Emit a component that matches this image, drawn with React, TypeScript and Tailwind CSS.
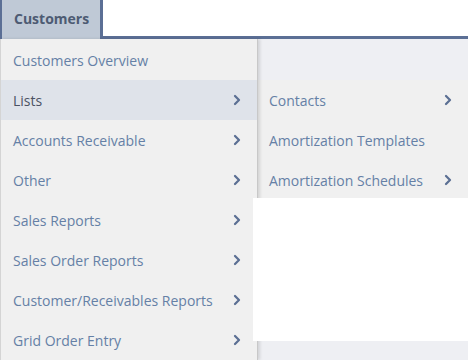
import { ChevronRight } from 'lucide-react';

const items = [
  { label: 'Customers Overview', sub: false },
  { label: 'Lists', sub: true, active: true },
  { label: 'Accounts Receivable', sub: true },
  { label: 'Other', sub: true },
  { label: 'Sales Reports', sub: true },
  { label: 'Sales Order Reports', sub: true },
  { label: 'Customer/Receivables Reports', sub: true },
  { label: 'Grid Order Entry', sub: true },
];

const subItems = [
  { label: 'Contacts', sub: true },
  { label: 'Amortization Templates', sub: false },
  { label: 'Amortization Schedules', sub: true },
];

export default function App() {
  return (
    <div
      className="w-[468px] h-[360px] overflow-hidden bg-[#eeeff3] text-[14px]"
      style={{ fontFamily: '"Open Sans", "Liberation Sans", sans-serif' }}
    >
      {/* Top tab bar */}
      <div className="flex h-[39px] bg-white">
        <div className="w-[103px] h-[39px] bg-[#bfc9d6] border-l-[2px] border-r-[3px] border-[#5b6f95] flex items-center pl-[12px] pb-[2px] font-bold text-[#4d5b73]">
          Customers
        </div>
        <div className="flex-1 flex flex-col justify-end">
          <div className="h-[3px] bg-[#5b6f95]" />
        </div>
      </div>

      <div className="flex">
        {/* Main menu */}
        <div className="w-[258px] shrink-0 bg-[#f0f0f0] border-l border-[#d4d4d4] border-r border-r-[#c8c8c8] shadow-[2px_0_3px_rgba(0,0,0,0.12)] pt-[1px] relative">
          {items.map((it) => (
            <div
              key={it.label}
              className={`h-[40px] flex items-center justify-between pl-[12px] pr-[12px] ${
                it.active ? 'bg-[#dfe3ea] text-[#4a5263]' : 'text-[#6580a6]'
              }`}
            >
              <span>{it.label}</span>
              {it.sub && <ChevronRight size={16} strokeWidth={3.4} className="text-[#5b6f93]" />}
            </div>
          ))}
        </div>

        {/* Flyout column */}
        <div className="flex-1 flex flex-col pt-[41px]">
          <div className="bg-[#f0f0f0] h-[118px] overflow-hidden">
            {subItems.map((it) => (
              <div
                key={it.label}
                className="h-[40px] flex items-center justify-between pl-[11px] pr-[12px] text-[#6580a6]"
              >
                <span>{it.label}</span>
                {it.sub && <ChevronRight size={16} strokeWidth={3.4} className="text-[#5b6f93]" />}
              </div>
            ))}
          </div>
          <div className="h-[143px] bg-white -ml-[5px] relative z-10" />
        </div>
      </div>
    </div>
  );
}
